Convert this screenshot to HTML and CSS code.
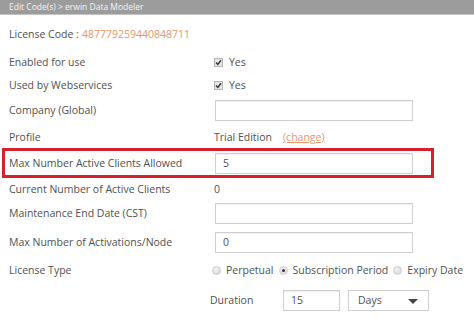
FILE: index.html
```html
<!DOCTYPE html>
<html lang="en">
<head>
    <meta charset="UTF-8">
    <title>Edit Code(s) &gt; erwin Data Modeler</title>
    <link rel="stylesheet" href="styles.css">
</head>
<body>

    <div class="titlebar">Edit Code(s) &gt; erwin Data Modeler</div>

    <div class="form">
        <div class="row">
            <span class="label">License Code :</span>
            <span class="code">487779259440848711</span>
        </div>

        <div class="row">
            <span class="label col">Enabled for use</span>
            <span class="check">
                <svg width="9" height="9" viewBox="0 0 9 9"><rect x="0.5" y="0.5" width="8" height="8" fill="#e6e6e6" stroke="#b5b5b5"/><path d="M2 4.6 L3.8 6.4 L7 2.3" fill="none" stroke="#333" stroke-width="1.4"/></svg>
                Yes
            </span>
        </div>

        <div class="row">
            <span class="label col">Used by Webservices</span>
            <span class="check">
                <svg width="9" height="9" viewBox="0 0 9 9"><rect x="0.5" y="0.5" width="8" height="8" fill="#e6e6e6" stroke="#b5b5b5"/><path d="M2 4.6 L3.8 6.4 L7 2.3" fill="none" stroke="#333" stroke-width="1.4"/></svg>
                Yes
            </span>
        </div>

        <div class="row">
            <span class="label col">Company (Global)</span>
            <input class="field" type="text" value="">
        </div>

        <div class="row">
            <span class="label col">Profile</span>
            <span class="value">Trial Edition</span>
            <a class="change" href="#">(change)</a>
        </div>

        <div class="row highlight">
            <span class="label col">Max Number Active Clients Allowed</span>
            <input class="field" type="text" value="5">
        </div>

        <div class="row">
            <span class="label col">Current Number of Active Clients</span>
            <span class="value">0</span>
        </div>

        <div class="row">
            <span class="label col">Maintenance End Date (CST)</span>
            <input class="field" type="text" value="">
        </div>

        <div class="row">
            <span class="label col">Max Number of Activations/Node</span>
            <input class="field" type="text" value="0">
        </div>

        <div class="row">
            <span class="label col radio-col">License Type</span>
            <span class="radio"><i class="dot"></i>Perpetual</span>
            <span class="radio"><i class="dot on"></i>Subscription Period</span>
            <span class="radio"><i class="dot"></i>Expiry Date</span>
        </div>

        <div class="row">
            <span class="label col dur-col"></span>
            <span class="dur-label">Duration</span>
            <input class="field small" type="text" value="15">
            <span class="select">Days <i class="arrow"></i></span>
        </div>
    </div>

</body>
</html>
```

FILE: styles.css
```css
body {
    margin: 0;
    padding: 0;
    background-color: #fff;
    color: #505050;
    font-family: 'Open Sans', 'Liberation Sans', sans-serif;
    font-size: 10.5px;
}

.titlebar {
    height: 15px;
    line-height: 14px;
    background-color: #9c9c9c;
    border-bottom: 1px solid #c4c4c4;
    box-sizing: border-box;
    color: #f4f4f4;
    font-size: 8.5px;
    padding-left: 9px;
}

.form {
    display: grid;
    grid-template-rows: 28px 23px 25px 27px 26px 26px 24px 29px 28px 30px 22px;
    align-items: start;
    padding: 8px 0 0 9px;
}

.row {
    display: flex;
    align-items: center;
    height: 22px;
    position: relative;
}

.col {
    width: 205px;
    flex: none;
}
.radio-col {
    width: 203px;
}
.dur-col {
    width: 201px;
}

.code {
    color: #e8956a; /* orange licence number */
    margin-left: 3px;
}

.check {
    display: flex;
    align-items: center;
    gap: 6px;
}

.field {
    width: 198px;
    height: 21px;
    box-sizing: border-box;
    border: 1px solid #cfcfcf;
    box-shadow: inset 0 1px 1px rgba(0, 0, 0, 0.06);
    padding: 0 7px;
    font-family: inherit;
    font-size: 10.5px;
    color: #505050;
    margin: 0 0 0 1px;
}
.field.small {
    width: 57px;
    margin: 0;
}

.change {
    color: #e8956a;
    margin-left: 11px;
}

.highlight::after {
    content: '';
    position: absolute;
    left: -7px;
    top: -4px;
    width: 432px;
    height: 30px;
    box-sizing: border-box;
    border: 3px solid #d8202a; /* red annotation frame */
}

.radio {
    display: flex;
    align-items: center;
    margin-right: 5px;
}
.dot {
    display: inline-block;
    width: 9px;
    height: 9px;
    border-radius: 50%;
    box-sizing: border-box;
    border: 1px solid #cdcdcd;
    background: radial-gradient(circle at 40% 35%, #f4f4f4, #d4d4d4);
    margin-right: 5px;
    position: relative;
}
.dot.on::after {
    content: '';
    position: absolute;
    left: 2px;
    top: 2px;
    width: 3px;
    height: 3px;
    border-radius: 50%;
    background-color: #333;
}

.dur-label {
    width: 73px;
}

.select {
    width: 81px;
    height: 21px;
    box-sizing: border-box;
    border: 1px solid #cfcfcf;
    margin-left: 8px;
    display: flex;
    align-items: center;
    padding-left: 9px;
    position: relative;
}
.arrow {
    position: absolute;
    right: 10px;
    top: 8px;
    width: 0;
    height: 0;
    border-left: 5px solid transparent;
    border-right: 5px solid transparent;
    border-top: 5px solid #444;
}
```
